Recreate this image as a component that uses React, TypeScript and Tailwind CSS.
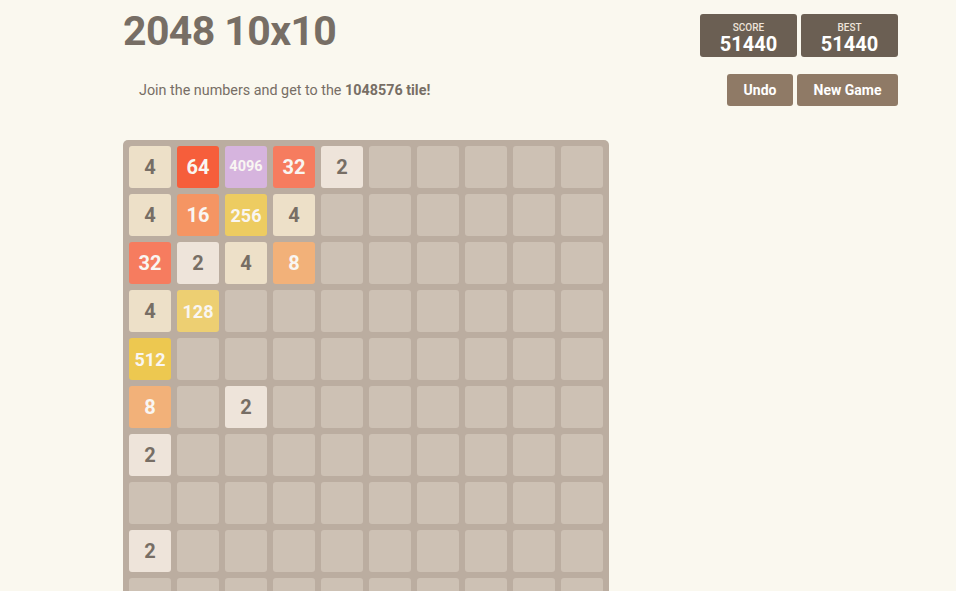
import React from "react";

const board: number[][] = [
  [4, 64, 4096, 32, 2, 0, 0, 0, 0, 0],
  [4, 16, 256, 4, 0, 0, 0, 0, 0, 0],
  [32, 2, 4, 8, 0, 0, 0, 0, 0, 0],
  [4, 128, 0, 0, 0, 0, 0, 0, 0, 0],
  [512, 0, 0, 0, 0, 0, 0, 0, 0, 0],
  [8, 0, 2, 0, 0, 0, 0, 0, 0, 0],
  [2, 0, 0, 0, 0, 0, 0, 0, 0, 0],
  [0, 0, 0, 0, 0, 0, 0, 0, 0, 0],
  [2, 0, 0, 0, 0, 0, 0, 0, 0, 0],
  [0, 0, 0, 0, 0, 0, 0, 0, 0, 0],
];

function tileClass(v: number): string {
  switch (v) {
    case 2:
      return "bg-[#eee4da] text-[#776e65] text-[20px]";
    case 4:
      return "bg-[#ede0c8] text-[#776e65] text-[20px]";
    case 8:
      return "bg-[#f2b179] text-[#f9f6f2] text-[20px]";
    case 16:
      return "bg-[#f59563] text-[#f9f6f2] text-[20px]";
    case 32:
      return "bg-[#f67c5f] text-[#f9f6f2] text-[20px]";
    case 64:
      return "bg-[#f65e3b] text-[#f9f6f2] text-[20px]";
    case 128:
      return "bg-[#edcf72] text-[#f9f6f2] text-[18px]";
    case 256:
      return "bg-[#edcc61] text-[#f9f6f2] text-[18px]";
    case 512:
      return "bg-[#edc850] text-[#f9f6f2] text-[18px]";
    case 4096:
      return "bg-[#d6b4de] text-[#f9f6f2] text-[14.5px]";
    default:
      return "bg-[#cdc1b4]";
  }
}

function ScoreBox({ label, value }: { label: string; value: string }) {
  return (
    <div className="w-[97px] h-[43px] rounded-[3px] bg-[#6b5f53] flex flex-col items-center justify-center pt-[5px]">
      <div className="text-[10px] leading-[11px] font-medium text-[#eee4da] uppercase">{label}</div>
      <div className="text-[20px] leading-[22px] font-bold text-white">{value}</div>
    </div>
  );
}

export default function App() {
  return (
    <div
      className="min-h-screen bg-[#faf8ef] text-[#776e65]"
      style={{ fontFamily: "Roboto, 'Noto Sans', sans-serif" }}
    >
      <div className="w-[775px] ml-[123px] pt-[14px]">
        <div className="flex justify-between items-start">
          <h1 className="text-[41px] leading-[36px] font-bold text-[#776e65] mt-[-1px] tracking-[-0.6px]">
            2048 10x10
          </h1>
          <div className="flex gap-[4px]">
            <ScoreBox label="Score" value="51440" />
            <ScoreBox label="Best" value="51440" />
          </div>
        </div>
        <div className="flex justify-between items-center mt-[17px]">
          <p className="pl-[16px] pt-[2px] text-[14.35px] text-[#776e65]">
            Join the numbers and get to the <b className="font-bold">1048576 tile!</b>
          </p>
          <div className="flex gap-[4px]">
            <button className="h-[32px] w-[66px] rounded-[3px] bg-[#8f7a66] text-white text-[14px] font-bold">
              Undo
            </button>
            <button className="h-[32px] w-[101px] rounded-[3px] bg-[#8f7a66] text-white text-[14px] font-bold">
              New Game
            </button>
          </div>
        </div>
        <div className="mt-[34px] w-[486px] rounded-[5px] bg-[#bbada0] p-[6px]">
          <div className="grid grid-cols-[repeat(10,42px)] gap-[6px]">
            {board.flatMap((row, r) =>
              row.map((v, c) => (
                <div
                  key={`${r}-${c}`}
                  className={`h-[42px] w-[42px] rounded-[3px] flex items-center justify-center font-bold ${tileClass(v)}`}
                >
                  {v > 0 ? v : ""}
                </div>
              ))
            )}
          </div>
        </div>
      </div>
    </div>
  );
}
